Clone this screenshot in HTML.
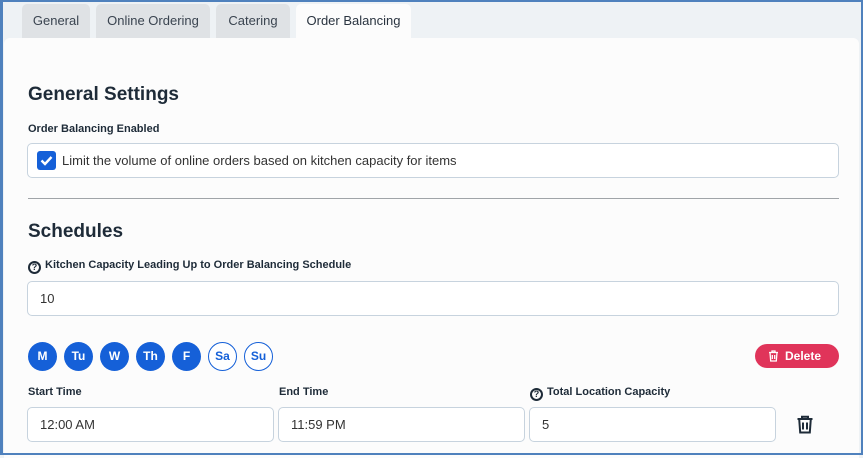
<!DOCTYPE html>
<html><head><style>
*{box-sizing:border-box;margin:0;padding:0}
body{width:863px;height:455px;overflow:hidden;font-family:"Liberation Sans",sans-serif;color:#1f2d3a;background:#eef2f5}
.frame{position:absolute;left:0;top:0;width:863px;height:455px;border:2px solid #4f81bd;border-left-width:3px}
.tab{position:absolute;top:4px;height:34px;border-radius:5px 5px 0 0;background:#dfe2e5;font-size:13px;color:#3a4450;text-align:center;line-height:34px}
.panel{position:absolute;left:4px;top:38px;width:855px;height:420px;background:#fcfcfc;border-radius:6px 6px 0 0}
h2{position:absolute;left:28px;font-size:19px;font-weight:bold;color:#1e2b38}
.lbl{position:absolute;font-size:11px;font-weight:bold;color:#1e2b38}
.inp{position:absolute;background:#fff;border:1px solid #c7d3de;border-radius:5px;font-size:13px;color:#333;padding-left:12px}
.day{position:absolute;top:342px;width:29px;height:29px;border-radius:50%;background:#1560d8;color:#fff;font-size:12px;font-weight:bold;text-align:center;line-height:29px}
.day.o{background:#fff;border:1.5px solid #1560d8;color:#1560d8;line-height:26px}
.q{display:inline-block;width:13px;height:13px;border:2px solid #1e2b38;border-radius:50%;font-size:9px;font-weight:bold;line-height:9px;text-align:center;vertical-align:-2px;margin-right:4px}
</style></head><body>
<div class="tab" style="left:22px;width:68px">General</div>
<div class="tab" style="left:96px;width:114px">Online Ordering</div>
<div class="tab" style="left:216px;width:74px">Catering</div>
<div class="tab" style="left:296px;width:115px;background:#fcfcfc;color:#2a3440">Order Balancing</div>
<div class="panel"></div>
<h2 style="top:84px">General Settings</h2>
<div class="lbl" style="left:28px;top:123px">Order Balancing Enabled</div>
<div class="inp" style="left:27px;top:143px;width:812px;height:35px;line-height:33px;padding-left:34px">Limit the volume of online orders based on kitchen capacity for items</div>
<div style="position:absolute;left:37px;top:151px;width:19px;height:19px;background:#1560d8;border-radius:3px"><svg width="19" height="19"><path d="M4.5 9.5l3.5 3.5 6.5-7" stroke="#fff" stroke-width="2.4" fill="none"/></svg></div>
<div style="position:absolute;left:28px;top:198px;width:811px;height:1px;background:#a0a4a8"></div>
<h2 style="top:221px">Schedules</h2>
<div class="lbl" style="left:28px;top:259px"><span class="q">?</span>Kitchen Capacity Leading Up to Order Balancing Schedule</div>
<div class="inp" style="left:27px;top:281px;width:812px;height:35px;line-height:33px">10</div>
<div class="day" style="left:28px">M</div>
<div class="day" style="left:64px">Tu</div>
<div class="day" style="left:100px">W</div>
<div class="day" style="left:136px">Th</div>
<div class="day" style="left:172px">F</div>
<div class="day o" style="left:208px">Sa</div>
<div class="day o" style="left:244px">Su</div>
<div style="position:absolute;left:755px;top:344px;width:84px;height:24px;border-radius:12px;background:#e0345a;color:#fff;font-size:12px;font-weight:bold;line-height:24px;padding-left:30px">Delete
<svg style="position:absolute;left:13px;top:6px" width="11" height="12" viewBox="0 0 11 12"><path d="M1 2.5h9M4 2.5V1h3v1.5M2 2.5l.7 8.5h5.6l.7-8.5M4.3 5v4M6.7 5v4" stroke="#fff" stroke-width="1.3" fill="none"/></svg></div>
<div class="lbl" style="left:28px;top:386px">Start Time</div>
<div class="lbl" style="left:279px;top:386px">End Time</div>
<div class="lbl" style="left:530px;top:386px"><span class="q">?</span>Total Location Capacity</div>
<div class="inp" style="left:27px;top:407px;width:247px;height:35px;line-height:33px">12:00 AM</div>
<div class="inp" style="left:278px;top:407px;width:247px;height:35px;line-height:33px">11:59 PM</div>
<div class="inp" style="left:529px;top:407px;width:247px;height:35px;line-height:33px">5</div>
<svg style="position:absolute;left:796px;top:415px" width="18" height="19" viewBox="0 0 18 19"><path d="M1.5 4h15M6 4V1.8h6V4M3.2 4l1 13.5h9.6l1-13.5M7 7.5v7M11 7.5v7" stroke="#1e2b38" stroke-width="2" fill="none"/></svg>
<div class="frame"></div>
</body></html>
